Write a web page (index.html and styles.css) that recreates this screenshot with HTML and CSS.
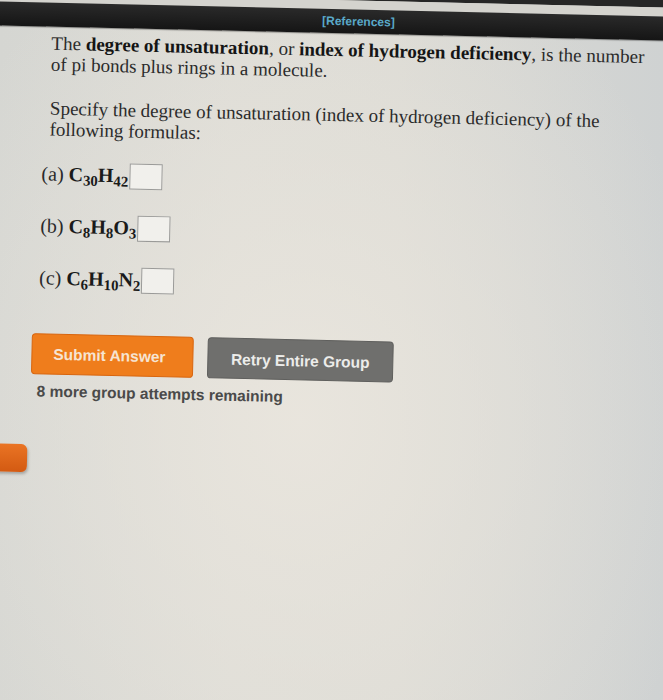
FILE: index.html
```html
<!DOCTYPE html>
<html>
<head>
<meta charset="utf-8">
<title>Degree of unsaturation</title>
<link rel="stylesheet" href="styles.css">
</head>
<body>
<div class="screen">
  <div class="bezel"></div>
  <div class="strip"></div>
  <div class="refbar"><span class="reflink">[References]</span></div>
  <div class="page">
    <p class="para first">The <b>degree of unsaturation</b>, or <b>index of hydrogen deficiency</b>, is the number of pi bonds plus rings in a molecule.</p>
    <p class="para second">Specify the degree of unsaturation (index of hydrogen deficiency) of the following formulas:</p>
    <div class="items">
      <div class="item"><span class="label">(a)</span><span class="formula">C<sub>30</sub>H<sub>42</sub></span><span class="box"></span></div>
      <div class="item"><span class="label">(b)</span><span class="formula">C<sub>8</sub>H<sub>8</sub>O<sub>3</sub></span><span class="box"></span></div>
      <div class="item"><span class="label">(c)</span><span class="formula">C<sub>6</sub>H<sub>10</sub>N<sub>2</sub></span><span class="box"></span></div>
    </div>
    <div class="buttons">
      <div class="btn submit">Submit Answer</div>
      <div class="btn retry">Retry Entire Group</div>
    </div>
    <div class="attempts">8 more group attempts remaining</div>
  </div>
  <div class="tab"></div>
</div>
</body>
</html>
```
FILE: styles.css
```css
html, body {
  margin: 0;
  padding: 0;
  height: 100%;
  overflow: hidden;
}
body {
  background:
    radial-gradient(ellipse 420px 520px at 300px 420px, rgba(234,230,222,0.9), rgba(234,230,222,0) 100%),
    linear-gradient(90deg, #d5d6d2 0%, #dcdbd5 35%, #dbdad4 60%, #cfd2d2 100%);
  font-family: "Liberation Serif", "Times New Roman", serif;
}
.screen {
  width: 720px;
  margin-left: -30px;
  margin-top: -20px;
  transform: rotate(1.3deg);
  transform-origin: 360px 220px;
}
.bezel {
  height: 20px;
  background: #262626;
}
.strip {
  height: 9px;
  background: #d4d3ce;
}
.refbar {
  height: 24px;
  background: linear-gradient(180deg, #2a2a2a, #151515);
  display: flex;
  align-items: center;
  padding-left: 348px;
  box-shadow: 0 1px 1px rgba(0,0,0,0.3);
}
.reflink {
  font-family: "Liberation Sans", Arial, sans-serif;
  font-weight: bold;
  font-size: 12px;
  color: #5aa9c9;
}
.page {
  margin-left: 30px;
  width: 663px;
}
.para {
  margin: 0;
  font-size: 19px;
  line-height: 21px;
  color: #2b2b2b;
  width: 603px;
  padding-left: 48px;
}
.para b {
  color: #151515;
}
.first {
  padding-top: 6px;
}
.second {
  margin-top: 23px;
}
.items {
  display: flex;
  flex-direction: column;
  gap: 26px;
  margin-top: 21px;
  padding-left: 41px;
}
.item {
  display: flex;
  align-items: center;
  height: 26px;
  font-size: 20px;
  color: #222;
}
.label {
  margin-right: 5px;
  color: #2a2a2a;
}
.formula {
  font-weight: bold;
  color: #1a1a1a;
}
.formula sub {
  font-size: 0.74em;
  line-height: 0;
  vertical-align: -0.28em;
}
.box {
  width: 31px;
  height: 24px;
  border: 1px solid #9a9a98;
  background: #f1f0ec;
  margin-left: 1px;
  margin-top: 2px;
}
.buttons {
  display: flex;
  gap: 14px;
  margin-top: 43px;
  padding-left: 35px;
}
.btn {
  height: 41px;
  box-sizing: border-box;
  display: flex;
  align-items: center;
  justify-content: center;
  border-radius: 4px;
  font-family: "Liberation Sans", Arial, sans-serif;
  font-weight: bold;
  font-size: 15.5px;
}
.submit {
  width: 162px;
  background: #ef7d1c;
  border: 1px solid #d8650e;
  color: #f6e4d2;
  padding-right: 6px;
}
.retry {
  width: 186px;
  background: #6f6f6d;
  border: 1px solid #5f5f5d;
  color: #ececea;
  padding-top: 2px;
}
.attempts {
  margin-top: 8px;
  padding-left: 41px;
  font-family: "Liberation Sans", Arial, sans-serif;
  font-weight: bold;
  font-size: 15.5px;
  line-height: 18px;
  color: #4a4a4a;
}
.tab {
  margin-top: 44px;
  width: 63px;
  height: 28px;
  border-radius: 0 6px 6px 0;
  background: linear-gradient(180deg, #ea7424, #d35a12);
  box-shadow: 1px 2px 3px rgba(0,0,0,0.25);
}
```
